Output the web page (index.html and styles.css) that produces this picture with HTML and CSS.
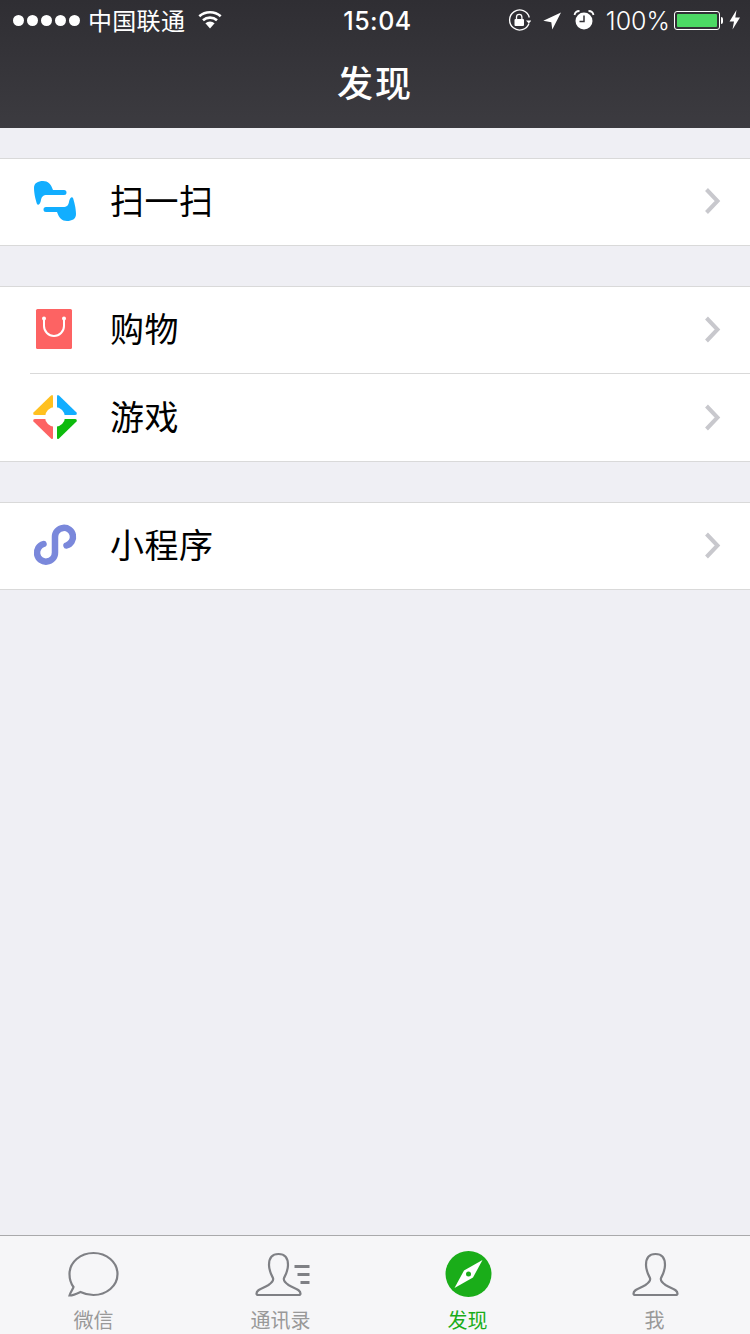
FILE: index.html
```html
<!DOCTYPE html>
<html lang="zh-CN">
<head>
  <meta charset="UTF-8" />
  <title>发现</title>
  <link rel="stylesheet" href="styles.css">
</head>
<body>
  <header class="top">
    <div class="status">
      <div class="status-left">
        <div class="signal"><i></i><i></i><i></i><i></i><i></i></div>
        <span class="carrier">中国联通</span>
        <svg class="wifi" width="26" height="22" viewBox="197 9 26 22">
          <path d="M210 28.500l-4.600-5.200a7 7 0 0 1 9.200 0z" fill="#fff"/>
          <path d="M203 20.300a10.500 10.500 0 0 1 14 0" class="wifi-arc"/>
          <path d="M199.300 16.300a16 16 0 0 1 21.400 0" class="wifi-arc"/>
        </svg>
      </div>
      <div class="time">15:04</div>
      <div class="status-right">
        <svg width="24" height="22" viewBox="507 9 24 22">
          <path d="M529 23.500a10 10 0 1 1 .3-6" fill="none" stroke="#fff" stroke-width="1.300"/>
          <path d="M526 20.500h5.500l-2.700 3z" fill="#fff"/>
          <rect x="514.500" y="19" width="9.500" height="7" rx="1" fill="#fff"/>
          <path d="M516.500 19v-2a2.700 2.700 0 0 1 5.400 0v2" fill="none" stroke="#fff" stroke-width="1.300"/>
        </svg>
        <svg width="20" height="22" viewBox="543 9 20 22">
          <path d="M562 12.500L544.300 20.700 552.300 22.300 553.300 29.500z" fill="#fff"/>
        </svg>
        <svg width="22" height="22" viewBox="574 9 22 22">
          <circle cx="585" cy="21" r="8.500" fill="#fff"/>
          <path d="M585 15.500V21.500H580.500" fill="none" stroke="#333237" stroke-width="1.500"/>
          <path d="M575.500 15a5 5 0 0 1 5-4M594.500 15a5 5 0 0 0-5-4" fill="none" stroke="#fff" stroke-width="1.800"/>
        </svg>
        <span class="battery-pct">100%</span>
        <div class="battery"><div class="battery-fill"></div></div>
        <svg class="bolt" width="11" height="20" viewBox="729 11 11 20">
          <path d="M736.500 11L729.500 22.500H734L732.500 30.500 740 18.500H735.300z" fill="#fff"/>
        </svg>
      </div>
    </div>
    <h1 class="title">发现</h1>
  </header>

  <main class="content">
    <section class="group">
      <div class="row">
        <svg class="row-icon" width="50" height="50" viewBox="30 177 50 50">
          <path fill="#12aeff" d="M34 188C34 183 38 181 43 181C48 181 51 184 53 190L64 190A2.500 2.500 0 0 1 64 195L47 195C43 195 41.500 197 41 200C40.500 204 38 206 37 204C36 201 34 194 34 188Z"/>
          <path transform="rotate(180 55 201)" fill="#12aeff" d="M34 188C34 183 38 181 43 181C48 181 51 184 53 190L64 190A2.500 2.500 0 0 1 64 195L47 195C43 195 41.500 197 41 200C40.500 204 38 206 37 204C36 201 34 194 34 188Z"/>
        </svg>
        <span class="row-label">扫一扫</span>
        <svg class="chevron" width="20" height="30" viewBox="702 187 20 30"><path d="M706.500 189.500L717.500 201 706.500 212.500"/></svg>
      </div>
    </section>

    <section class="group">
      <div class="row">
        <svg class="row-icon" width="50" height="50" viewBox="30 305 50 50">
          <rect x="36" y="309" width="36" height="40" rx="1.500" fill="#fd6363"/>
          <path d="M44 319v7a10 10 0 0 0 20 0v-7" fill="none" stroke="#fff" stroke-width="2"/>
          <circle cx="44" cy="318.500" r="2" fill="#fff"/>
          <circle cx="64" cy="318.500" r="2" fill="#fff"/>
        </svg>
        <span class="row-label">购物</span>
        <svg class="chevron" width="20" height="30" viewBox="702 315 20 30"><path d="M706.500 318L717.500 329.500 706.500 341"/></svg>
      </div>
      <div class="row row-sep">
        <svg class="row-icon" width="50" height="50" viewBox="30 392 50 50">
          <path d="M53 396.500Q53 394 51 395.500L33.500 412.500Q32.500 415 35 415H53Z" fill="#ffc01f"/>
          <path d="M57 396.500Q57 394 59 395.500L76.500 412.500Q77.500 415 75 415H57Z" fill="#12aeff"/>
          <path d="M53 437.500Q53 440 51 438.500L33.500 421.500Q32.500 419 35 419H53Z" fill="#fd6363"/>
          <path d="M57 437.500Q57 440 59 438.500L76.500 421.500Q77.500 419 75 419H57Z" fill="#0dbb0d"/>
          <circle cx="55" cy="417" r="10" fill="#fff"/>
        </svg>
        <span class="row-label">游戏</span>
        <svg class="chevron" width="20" height="30" viewBox="702 402 20 30"><path d="M706.500 406L717.500 417.500 706.500 429"/></svg>
      </div>
    </section>

    <section class="group">
      <div class="row">
        <svg class="row-icon" width="50" height="50" viewBox="30 521 50 50">
          <path d="M66.500 545.500A9 9 0 1 0 55 537V552.500A9 9 0 1 1 43.500 544" fill="none" stroke="#7a88db" stroke-width="6.500" stroke-linecap="round"/>
        </svg>
        <span class="row-label">小程序</span>
        <svg class="chevron" width="20" height="30" viewBox="702 531 20 30"><path d="M706.500 534L717.500 545.500 706.500 557"/></svg>
      </div>
    </section>
  </main>

  <nav class="tabs">
    <div class="tab">
      <svg width="60" height="50" viewBox="63.500 1250 60 50">
        <path class="tab-line" d="M69 1295.500C70 1292 72.500 1289 73 1287C70 1283 69 1278 69 1274C69 1262 80 1253 93 1253C106 1253 117 1262 117 1274C117 1286 106 1295 93 1295C88 1295 84 1294 80 1292C76 1294 73 1295.500 69 1295.500Z"/>
      </svg>
      <span>微信</span>
    </div>
    <div class="tab">
      <svg width="60" height="50" viewBox="250.500 1250 60 50">
        <path class="tab-line" d="M278 1254C271 1254 268.500 1259 268.500 1265C268.500 1271 271 1275 272.500 1278C273.500 1281 271 1283 268 1285C262 1288.500 256 1289.500 256 1293.500Q256 1295 258 1295H298Q300 1295 300 1293.500C300 1289.500 294 1288.500 288 1285C285 1283 282.500 1281 283.500 1278C285 1275 287.500 1271 287.500 1265C287.500 1259 285 1254 278 1254Z"/>
        <rect x="294" y="1265" width="15" height="3" fill="#7f8085"/>
        <rect x="297" y="1273" width="12" height="3" fill="#7f8085"/>
        <rect x="300" y="1281" width="9" height="3" fill="#7f8085"/>
      </svg>
      <span>通讯录</span>
    </div>
    <div class="tab tab-active">
      <svg width="60" height="50" viewBox="437.500 1250 60 50">
        <circle cx="468" cy="1274" r="23" fill="#1aad19"/>
        <path d="M482 1260L472.500 1277.500 454 1288 463.500 1270.500Z" fill="#fff"/>
        <circle cx="468" cy="1274" r="2.500" fill="#1aad19"/>
      </svg>
      <span>发现</span>
    </div>
    <div class="tab">
      <svg width="60" height="50" viewBox="624.500 1250 60 50">
        <path class="tab-line" transform="translate(377 0)" d="M278 1254C271 1254 268.500 1259 268.500 1265C268.500 1271 271 1275 272.500 1278C273.500 1281 271 1283 268 1285C262 1288.500 256 1289.500 256 1293.500Q256 1295 258 1295H298Q300 1295 300 1293.500C300 1289.500 294 1288.500 288 1285C285 1283 282.500 1281 283.500 1278C285 1275 287.500 1271 287.500 1265C287.500 1259 285 1254 278 1254Z"/>
      </svg>
      <span>我</span>
    </div>
  </nav>
</body>
</html>
```

FILE: styles.css
```css
* {
  box-sizing: border-box;
}

html, body {
  height: 100%;
}

body {
  margin: 0;
  width: 750px;
  height: 1334px;
  overflow: hidden;
  display: flex;
  flex-direction: column;
  background-color: #efeff4;
  font-family: "Noto Sans CJK SC", "Noto Sans", sans-serif;
}

/* header */
.top {
  height: 128px;
  flex: none;
  color: #fff;
  background: linear-gradient(#2f2e33, #3c3b40);
}

.status {
  height: 40px;
  display: grid;
  grid-template-columns: 1fr auto 1fr;
  align-items: center;
  padding: 0 10px 0 13px;
}

.status-left, .status-right {
  display: flex;
  align-items: center;
}

.status-right {
  justify-content: flex-end;
  gap: 11px;
}

.status-right svg, .status-left svg {
  display: block;
}

.signal {
  display: flex;
  gap: 3px;
}

.signal i {
  width: 11px;
  height: 11px;
  border-radius: 50%;
  background-color: #fff;
}

.carrier {
  font-size: 24px;
  letter-spacing: 0.3px;
  line-height: 40px;
  margin-left: 8px;
}

.wifi {
  margin-left: 12px;
}

.wifi-arc {
  fill: none;
  stroke: #fff;
  stroke-width: 2.600;
}

.time {
  font-family: "Inter", "Liberation Sans", sans-serif;
  font-size: 25px;
  font-weight: 500;
  letter-spacing: 0.5px;
  margin-left: 2px;
  padding-top: 2px;
}

.battery-pct {
  font-family: "Inter", "Liberation Sans", sans-serif;
  font-size: 25px;
  font-weight: 300;
  margin-right: -7px;
  padding-top: 2px;
}

.battery {
  width: 46px;
  height: 19px;
  padding: 2px;
  border: 1px solid #fff;
  border-radius: 3px;
  position: relative;
}

.battery::after {
  content: "";
  position: absolute;
  right: -4px;
  top: 5px;
  width: 2px;
  height: 7px;
  background-color: #fff;
  border-radius: 0 2px 2px 0;
}

.battery-fill {
  height: 100%;
  background-color: #4cd964;
  border-radius: 1px;
}

.bolt {
  margin-left: -2px;
}

.title {
  margin: 0;
  height: 88px;
  line-height: 83px;
  text-align: center;
  font-size: 36px;
  font-weight: 500;
  letter-spacing: 2px;
}

/* list */
.content {
  flex: 1;
  padding-top: 30px;
  display: flex;
  flex-direction: column;
  gap: 40px;
}

.group {
  background-color: #fff;
  border-top: 1px solid #d9d9d9;
  border-bottom: 1px solid #d9d9d9;
}

.row {
  height: 86px;
  display: flex;
  align-items: center;
  padding-left: 30px;
  padding-right: 28px;
}

.row-sep {
  position: relative;
  height: 88px;
}

.row-sep::before {
  content: "";
  position: absolute;
  left: 30px;
  right: 0;
  top: 0;
  height: 1px;
  background-color: #d9d9d9;
}

.row-icon {
  flex: none;
}

.row-label {
  flex: 1;
  margin-left: 30px;
  padding-bottom: 5px;
  font-size: 34px;
  letter-spacing: 0.5px;
  color: #000;
}

.row-sep .row-label {
  padding-bottom: 3px;
}

.chevron {
  flex: none;
}

.chevron path {
  fill: none;
  stroke: #c8c8cd;
  stroke-width: 4;
}

/* tab bar */
.tabs {
  height: 99px;
  flex: none;
  display: grid;
  grid-template-columns: repeat(4, 1fr);
  padding-right: 2px;
  background-color: #f6f6f8;
  border-top: 1px solid #a9a9ab;
}

.tab {
  display: flex;
  flex-direction: column;
  align-items: center;
  padding-top: 14px;
  font-size: 20px;
  line-height: 28px;
  color: #999;
}

.tab svg {
  display: block;
  margin-bottom: 6px;
}

.tab-line {
  fill: none;
  stroke: #7f8085;
  stroke-width: 2.200;
}

.tab-active {
  color: #1aad19;
}
```
